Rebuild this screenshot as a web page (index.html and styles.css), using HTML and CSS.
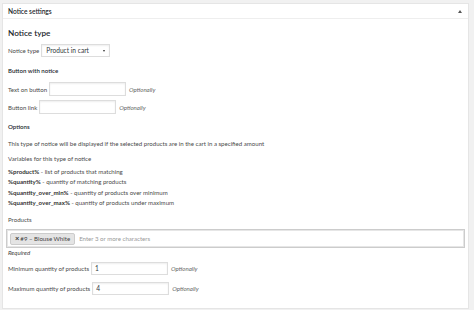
FILE: index.html
```html
<!DOCTYPE html>
<html lang="en">

<head>
  <meta charset="UTF-8">
  <meta name="viewport" content="width=device-width, initial-scale=1.0">
  <title>Notice settings</title>
  <link rel="stylesheet" href="styles.css">
</head>

<body>
  <div class="panel">
    <div class="panel-head">
      <span class="panel-title">Notice settings</span>
      <span class="toggle"></span>
    </div>
    <div class="panel-body">
      <h2>Notice type</h2>
      <div class="row row-select">
        <label>Notice type</label>
        <div class="select">
          <span>Product in cart</span>
          <i class="caret"></i>
        </div>
      </div>

      <h4 class="sub">Button with notice</h4>
      <div class="row row-first">
        <label>Text on button</label>
        <div class="input"></div>
        <em class="hint">Optionally</em>
      </div>
      <div class="row row-link">
        <label>Button link</label>
        <div class="input"></div>
        <em class="hint">Optionally</em>
      </div>

      <h4 class="sub sub-options">Options</h4>
      <p class="desc">This type of notice will be displayed if the selected products are in the cart in a specified amount</p>
      <p class="vars-title">Variables for this type of notice</p>
      <ul class="vars">
        <li><b>%product%</b> - list of products that matching</li>
        <li><b>%quantity%</b> - quantity of matching products</li>
        <li><b>%quantity_over_min%</b> - quantity of products over minimum</li>
        <li><b>%quantity_over_max%</b> - quantity of products under maximum</li>
      </ul>

      <p class="products-label">Products</p>
      <div class="select2">
        <span class="chip"><b>&times;</b>#9 &ndash; Blouse White</span>
        <span class="placeholder">Enter 3 or more characters</span>
      </div>
      <p class="required">Required</p>

      <div class="row row-min">
        <label>Minimum quantity of products</label>
        <div class="input">1</div>
        <em class="hint">Optionally</em>
      </div>
      <div class="row row-max">
        <label>Maximum quantity of products</label>
        <div class="input">4</div>
        <em class="hint">Optionally</em>
      </div>
    </div>
  </div>
</body>

</html>
```

FILE: styles.css
```css
* {
  margin: 0;
  padding: 0;
  box-sizing: border-box;
}

html {
  background-color: #f1f1f1;
}

body {
  padding: 3px 5px 0 2px;
  font-family: Lato, "Open Sans", sans-serif;
  font-size: 6.1px;
  line-height: 9px;
  color: #4a4a4a;
}

li {
  list-style: none;
}

.panel {
  background-color: #fff;
  border: 1px solid #e5e5e5;
}

.panel-head {
  height: 15px;
  display: flex;
  align-items: center;
  justify-content: space-between;
  padding: 0 6px 0 5px;
  border-bottom: 1px solid #eee;
}

.panel-title {
  font-size: 6.6px;
  font-weight: 600;
  color: #23282d;
}

.toggle {
  width: 0;
  height: 0;
  border-left: 2px solid transparent;
  border-right: 2px solid transparent;
  border-bottom: 3px solid #555;
}

.panel-body {
  padding: 8px 5px 13px;
}

h2 {
  font-size: 8.2px;
  line-height: 12px;
  font-weight: 600;
  color: #23282d;
}

.row {
  display: flex;
  align-items: center;
  gap: 2px;
  height: 14px;
}

.row-select {
  margin-top: 5px;
  height: 13px;
}

.row-first {
  margin-top: 7px;
}

.row-link {
  margin-top: 4px;
}

.row-min {
  margin-top: 5px;
  height: 13px;
}

.row-max {
  margin-top: 7px;
  height: 13px;
}

.select {
  width: 69px;
  height: 13px;
  display: flex;
  align-items: center;
  justify-content: space-between;
  padding: 0 4px;
  border: 1px solid #ddd;
  box-shadow: inset 0 1px 2px rgba(0, 0, 0, .07);
  font-size: 6.6px;
  color: #32373c;
}

.caret {
  width: 0;
  height: 0;
  border-left: 1.5px solid transparent;
  border-right: 1.5px solid transparent;
  border-top: 2.5px solid #333;
}

.input {
  width: 77px;
  height: 100%;
  border: 1px solid #ddd;
  box-shadow: inset 0 1px 2px rgba(0, 0, 0, .07);
  padding: 0 3px;
  display: flex;
  align-items: center;
  color: #32373c;
  font-size: 6.6px;
}

.hint {
  color: #666;
  margin-left: 1px;
}

.sub {
  margin-top: 9px;
  font-size: 6.1px;
  font-weight: 600;
  color: #23282d;
}

.sub-options {
  margin-top: 8px;
}

.desc {
  margin-top: 8px;
}

.vars-title {
  margin-top: 6px;
}

.vars {
  margin-top: 4px;
  line-height: 10.3px;
}

.vars b {
  font-weight: 700;
  color: #333;
}

.products-label {
  margin-top: 7px;
}

.select2 {
  margin: 5px -2px 0;
  height: 19px;
  display: flex;
  align-items: center;
  gap: 4px;
  padding: 0 3px;
  border: 1px solid #ccc;
  box-shadow: inset 0 0 0 1px #e6e6e6;
}

.chip {
  height: 12px;
  display: flex;
  align-items: center;
  padding: 0 4px;
  background-color: #e4e4e4;
  border: 1px solid #ccc;
  border-radius: 2px;
  color: #444;
}

.chip b {
  color: #333;
  font-size: 7.5px;
  margin-right: 1px;
}

.placeholder {
  color: #999;
}

.required {
  font-style: italic;
  color: #444;
}
```
